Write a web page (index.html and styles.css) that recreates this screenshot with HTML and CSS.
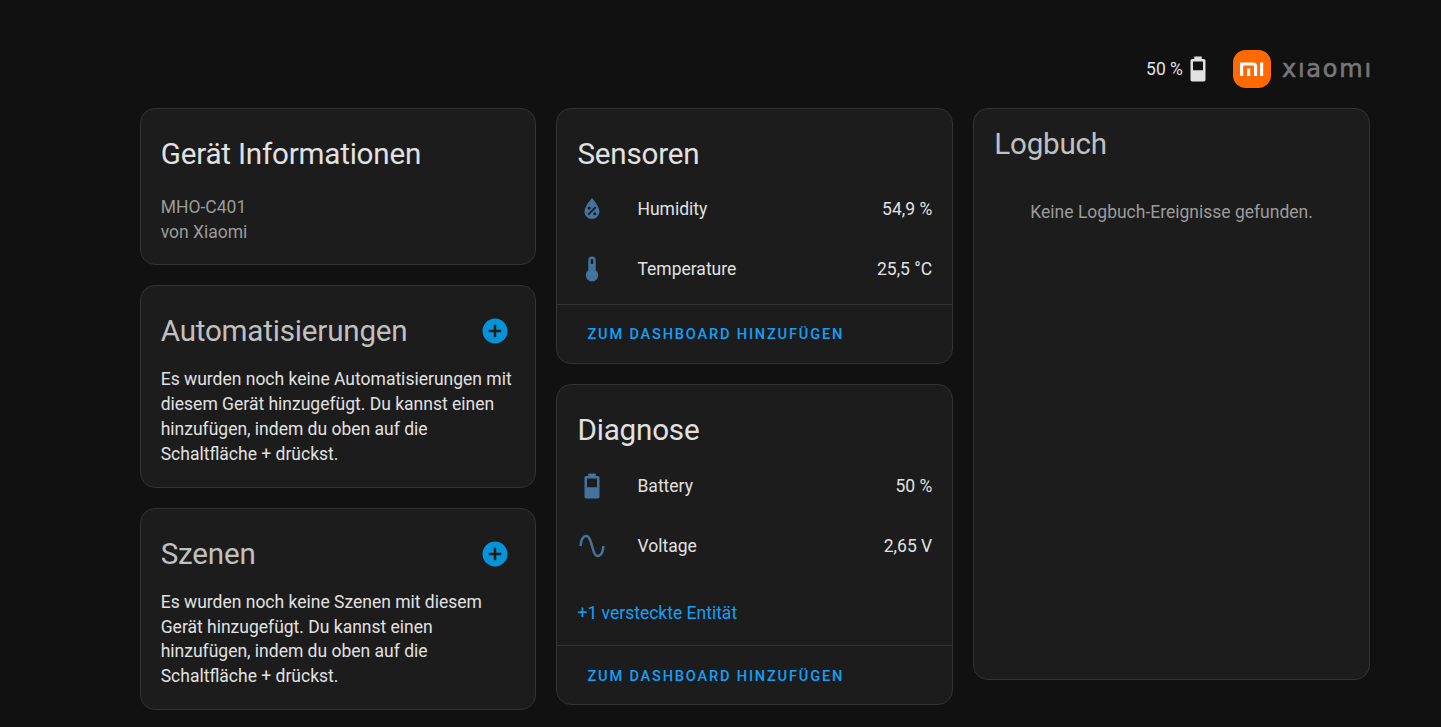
FILE: index.html
```html
<!DOCTYPE html>
<html lang="de">
<head>
    <meta charset="UTF-8">
    <title>Gerät</title>
    <link rel="stylesheet" href="styles.css">
</head>
<body>
    <header class="topbar">
        <span class="battery-text">50 %</span>
        <svg class="battery-icon" viewBox="0 0 24 24"><path d="M16 13H8V6H16M16.67 4H15V2H9V4H7.33C6.6 4 6 4.6 6 5.33V20.67C6 21.4 6.6 22 7.33 22H16.67C17.4 22 18 21.4 18 20.67V5.33C18 4.6 17.4 4 16.67 4Z"/></svg>
        <svg class="mi-logo" viewBox="0 0 38 38">
            <rect width="38" height="38" rx="12.5" fill="#ff6900"/>
            <path d="M7 12.5H20.5C22.7 12.5 24.2 14 24.2 16.2V26H21V16.8C21 16 20.6 15.6 19.8 15.6H10.2V26H7ZM14 18.5H17.2V26H14ZM27 12.5H30.2V26H27Z" fill="#fff"/>
        </svg>
        <span class="wordmark">xıaomı</span>
    </header>

    <main class="columns">
        <div class="column">
            <section class="card info-card">
                <h2 class="title">Gerät Informationen</h2>
                <p class="muted">MHO-C401<br>von Xiaomi</p>
            </section>
            <section class="card empty-card">
                <div class="title-row">
                    <h2 class="title dim">Automatisierungen</h2>
                    <svg class="add-icon" viewBox="0 0 24 24"><path d="M17,13H13V17H11V13H7V11H11V7H13V11H17M12,2A10,10 0 0,0 2,12A10,10 0 0,0 12,22A10,10 0 0,0 22,12A10,10 0 0,0 12,2Z"/></svg>
                </div>
                <p class="body-text">Es wurden noch keine Automatisierungen mit diesem Gerät hinzugefügt. Du kannst einen hinzufügen, indem du oben auf die Schaltfläche + drückst.</p>
            </section>
            <section class="card empty-card">
                <div class="title-row">
                    <h2 class="title dim">Szenen</h2>
                    <svg class="add-icon" viewBox="0 0 24 24"><path d="M17,13H13V17H11V13H7V11H11V7H13V11H17M12,2A10,10 0 0,0 2,12A10,10 0 0,0 12,22A10,10 0 0,0 22,12A10,10 0 0,0 12,2Z"/></svg>
                </div>
                <p class="body-text">Es wurden noch keine Szenen mit diesem Gerät hinzugefügt. Du kannst einen hinzufügen, indem du oben auf die Schaltfläche + drückst.</p>
            </section>
        </div>

        <div class="column">
            <section class="card">
                <h2 class="title entity-title">Sensoren</h2>
                <div class="entity">
                    <svg class="entity-icon" viewBox="0 0 24 24"><path d="M12,3.25C12,3.25 6,10 6,14C6,17.32 8.69,20 12,20A6,6 0 0,0 18,14C18,10 12,3.25 12,3.25M14.47,9.97L15.53,11.03L9.53,17.03L8.47,15.97M9.75,10A1.25,1.25 0 0,1 11,11.25A1.25,1.25 0 0,1 9.75,12.5A1.25,1.25 0 0,1 8.5,11.25A1.25,1.25 0 0,1 9.75,10M14.25,14.5A1.25,1.25 0 0,1 15.5,15.75A1.25,1.25 0 0,1 14.25,17A1.25,1.25 0 0,1 13,15.75A1.25,1.25 0 0,1 14.25,14.5Z"/></svg>
                    <span class="entity-name">Humidity</span>
                    <span class="entity-value">54,9 %</span>
                </div>
                <div class="entity">
                    <svg class="entity-icon" viewBox="0 0 24 24"><path d="M15 13V5A3 3 0 0 0 9 5V13A5 5 0 1 0 15 13M12 4A1 1 0 0 1 13 5V8H11V5A1 1 0 0 1 12 4Z"/></svg>
                    <span class="entity-name">Temperature</span>
                    <span class="entity-value">25,5 °C</span>
                </div>
                <div class="card-actions"><a class="action-link">ZUM DASHBOARD HINZUFÜGEN</a></div>
            </section>
            <section class="card">
                <h2 class="title entity-title diagnose-title">Diagnose</h2>
                <div class="entity">
                    <svg class="entity-icon" viewBox="0 0 24 24"><path d="M16 13H8V6H16M16.67 4H15V2H9V4H7.33C6.6 4 6 4.6 6 5.33V20.67C6 21.4 6.6 22 7.33 22H16.67C17.4 22 18 21.4 18 20.67V5.33C18 4.6 17.4 4 16.67 4Z"/></svg>
                    <span class="entity-name">Battery</span>
                    <span class="entity-value">50 %</span>
                </div>
                <div class="entity">
                    <svg class="entity-icon" viewBox="0 0 24 24"><path d="M16.5,21C13.5,21 12.31,16.76 11.05,12.28C10.14,9.04 9,5 7.5,5C4.11,5 4,11.93 4,12H2C2,11.63 2.06,3 7.5,3C10.5,3 11.71,7.25 12.97,11.74C13.83,14.8 15,19 16.5,19C19.94,19 20.03,12.07 20.03,12H22.03C22.03,12.37 21.97,21 16.5,21Z"/></svg>
                    <span class="entity-name">Voltage</span>
                    <span class="entity-value">2,65 V</span>
                </div>
                <a class="hidden-link">+1 versteckte Entität</a>
                <div class="card-actions"><a class="action-link">ZUM DASHBOARD HINZUFÜGEN</a></div>
            </section>
        </div>

        <div class="column">
            <section class="card logbook">
                <h2 class="title dim">Logbuch</h2>
                <p class="muted logbook-empty">Keine Logbuch-Ereignisse gefunden.</p>
            </section>
        </div>
    </main>
</body>
</html>
```

FILE: styles.css
```css
body {
    margin: 0;
    height: 727px;
    overflow: hidden;
    background-color: #111111;
    color: #e1e1e1;
    font-family: Roboto, "Liberation Sans", sans-serif;
    font-size: 17.5px;
}
.topbar {
    display: flex;
    align-items: center;
    justify-content: flex-end;
    height: 38px;
    padding: 50px 68px 20px 0;
}
.battery-text {
    color: #e1e1e1;
    font-size: 17.5px;
}
.battery-icon {
    width: 30px;
    height: 30px;
    fill: #e1e1e1;
    margin-right: 20px;
}
.mi-logo {
    width: 38px;
    height: 38px;
}
.wordmark {
    margin-left: 11px;
    color: #777777;
    font-family: "DejaVu Sans", sans-serif;
    font-size: 24px;
    letter-spacing: 1.8px;
    -webkit-text-stroke: 0.6px #777777;
}
.columns {
    display: flex;
    gap: 20px;
    margin: 0 71px 0 139.7px;
}
.column {
    flex: 1;
    display: flex;
    flex-direction: column;
    gap: 20px;
    min-width: 0;
}
.card {
    box-sizing: border-box;
    background-color: #1c1c1c;
    border: 1px solid #333333;
    border-radius: 15px;
}
.title {
    margin: 0;
    font-size: 29.6px;
    font-weight: 400;
    line-height: 40px;
    letter-spacing: -0.2px;
}
.dim {
    color: #c0c0c0;
}
.muted {
    margin: 0;
    color: #9b9b9b;
    line-height: 25px;
}
.info-card {
    height: 157px;
    padding: 25px 20px 0;
}
.info-card .muted {
    margin-top: 21px;
}
.empty-card {
    padding: 25px 20px 20.4px;
}
.title-row {
    display: flex;
    align-items: center;
    justify-content: space-between;
    height: 40px;
}
.add-icon {
    width: 30px;
    height: 30px;
    fill: #0694d8;
    margin-right: 5px;
}
.body-text {
    margin: 16.4px 0 0;
    line-height: 24.7px;
}
.entity-title {
    padding: 25px 20px 5px;
}
.diagnose-title {
    padding-bottom: 5.5px;
}
.entity {
    display: flex;
    align-items: center;
    height: 60px;
    padding: 0 20px;
}
.entity-icon {
    width: 30px;
    height: 30px;
    fill: #44739e;
    margin-right: 30px;
}
.entity-name {
    flex: 1;
}
.card-actions {
    display: flex;
    align-items: center;
    height: 58px;
    margin-top: 5px;
    padding: 0 30px;
    border-top: 1px solid #333333;
}
.action-link {
    color: #12a0f8;
    font-size: 14.6px;
    font-weight: 500;
    letter-spacing: 1.8px;
}
.hidden-link {
    display: block;
    padding: 25px 20px 19.5px;
    color: #12a0f8;
    line-height: 25px;
}
.hidden-link + .card-actions {
    height: 57px;
    margin-top: 0;
    padding-top: 1px;
}
.logbook {
    height: 572px;
    padding: 15px 20px 0;
}
.logbook-empty {
    margin-top: 36px;
    text-align: center;
}
```
